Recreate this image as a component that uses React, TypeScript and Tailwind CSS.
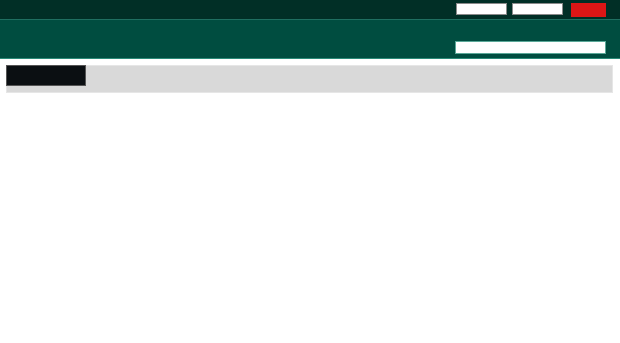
export default function App() {
  return (
    <div className="min-h-[343px] w-full bg-white font-['Liberation_Sans',sans-serif]">
      <header>
        <div className="flex h-[20px] items-start justify-end border-b border-[#1f6f60] bg-[#012f26] pr-[14px] pt-[3px]">
          <div className="flex items-start gap-[5px]">
            <button className="h-[12px] w-[51px] border border-[#8a8a8a] bg-white" />
            <button className="h-[12px] w-[51px] border border-[#8a8a8a] bg-white" />
          </div>
          <button className="ml-[8px] h-[14px] w-[35px] bg-[#dc1616]" />
        </div>
        <div className="flex h-[39px] items-start justify-end border-b border-[#2a8a78] bg-[#004d40] pr-[14px] pt-[21px]">
          <input
            type="text"
            className="h-[13px] w-[151px] border border-[#5aa898] bg-white outline-none"
          />
        </div>
      </header>
      <main className="px-[6px] pt-[6px]">
        <div className="flex h-[28px] w-[607px] items-start border border-[#e6e6e6] bg-[#d9d9d9]">
          <div className="-ml-px -mt-px h-[21px] w-[80px] border border-[#555] bg-[#0b0f12]" />
        </div>
      </main>
    </div>
  );
}
